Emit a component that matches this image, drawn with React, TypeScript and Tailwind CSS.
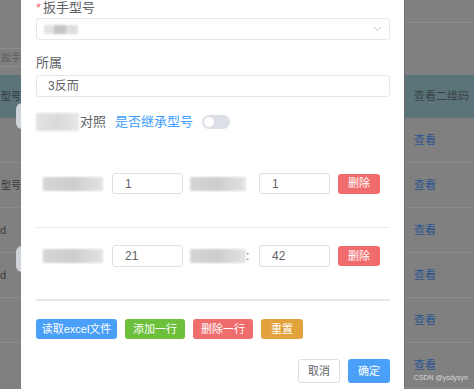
import React from 'react';

// Mosaic-blurred placeholder (the screenshot hides these labels)
const Smudge: React.FC<{ className?: string }> = ({ className = '' }) => (
  <div className={`rounded-[1px] bg-gradient-to-r from-[#d6d6d6] via-[#cdcdcd] to-[#e4e4e4] blur-[1px] ${className}`} />
);

const Field: React.FC<{ value: string }> = ({ value }) => (
  <div className="flex h-full w-[71px] items-center rounded-[3px] border border-[#dcdfe6] pl-[12px] text-[12px] text-[#606266]">
    {value}
  </div>
);

const Btn: React.FC<{ label: string; className: string }> = ({ label, className }) => (
  <div className={`flex h-full items-center justify-center rounded-[3px] text-[11px] text-white ${className}`}>{label}</div>
);

const LeftColumn = () => (
  <div className="flex w-[21px] shrink-0 flex-col overflow-hidden whitespace-nowrap text-[10px]">
    <div className="h-[75px]">
      <div className="mt-[48px] flex h-[19px] items-center justify-end border-y border-[#8e8e8e] text-[#5e5e5e]">
        扳手
      </div>
    </div>
    <div className="flex h-[43px] items-center justify-end bg-[#5b7479] text-[#2f3a3c]">型号</div>
    <div className="h-[45px] border-b border-[#8a8a8a]" />
    <div className="flex h-[45px] items-center justify-end border-b border-[#8a8a8a] text-[#3a3a3a]">型号</div>
    <div className="flex h-[45px] items-center border-b border-[#8a8a8a] text-[11px] text-[#3a3a3a]">d</div>
    <div className="flex h-[45px] items-center border-b border-[#8a8a8a] text-[11px] text-[#3a3a3a]">d</div>
    <div className="h-[45px] border-b border-[#8a8a8a]" />
  </div>
);

const RightColumn = () => (
  <div className="flex flex-1 flex-col border-l border-[#6e6e6e] text-[11px]">
    <div className="h-[75px]">
      <div className="mt-[22px] h-px bg-[#8a8a8a]" />
    </div>
    <div className="flex h-[43px] items-center bg-[#5b7479] pl-[9px] text-[#3a4446]">查看二维码</div>
    {[0, 1, 2, 3, 4, 5].map((i) => (
      <div key={i} className="flex h-[45px] shrink-0 items-center border-b border-[#8a8a8a] pl-[9px] text-[#2a5590]">
        查看
      </div>
    ))}
  </div>
);

const PairRow: React.FC<{ a: string; b: string; colon?: boolean; h: string }> = ({ a, b, colon, h }) => (
  <div className={`flex items-center ${h}`}>
    <Smudge className="ml-[7px] h-[14px] w-[60px]" />
    <div className="ml-[9px] h-full">
      <Field value={a} />
    </div>
    <Smudge className="ml-[7px] h-[14px] w-[56px]" />
    <span className="w-[4px] text-[12px] text-[#606266]">{colon ? ':' : ''}</span>
    <div className="ml-[9px] h-full">
      <Field value={b} />
    </div>
    <div className="ml-[8px] h-[20px] w-[42px]">
      <Btn label="删除" className="bg-[#f06c6c]" />
    </div>
  </div>
);

export default function App() {
  return (
    <div className="relative flex h-[389px] w-[474px] overflow-hidden bg-[#808080] font-['Liberation_Sans','Noto_Sans_CJK_SC',sans-serif]">
      <LeftColumn />

      {/* edge bits peeking out from under the dialog */}
      <div className="absolute left-[16px] top-[103px] h-[26px] w-[12px] rounded-full bg-[#cfd3d7]" />
      <div className="absolute left-[16px] top-[246px] h-[26px] w-[12px] rounded-full bg-[#cfd3d7]" />

      <div className="relative z-10 flex w-[383px] shrink-0 flex-col bg-white pl-[15px] pr-[14px] text-[13px] text-[#606266]">
        <div className="flex h-[16px] items-center">
          <span className="mr-[2px] text-[#f56c6c]">*</span>
          <span>扳手型号</span>
        </div>
        <div className="mt-[2px] flex h-[22px] items-center justify-between rounded-[3px] border border-[#e4e7ed] pl-[7px] pr-[7px]">
          <div className="flex h-[9px] w-[34px] blur-[1px]">
            <div className="w-[10px] bg-[#e2e2e2]" />
            <div className="w-[12px] bg-[#c4c4c4]" />
            <div className="w-[12px] bg-[#dedede]" />
          </div>
          <svg width="9" height="6" viewBox="0 0 9 6" fill="none">
            <path d="M1 1l3.5 3.5L8 1" stroke="#c0c4cc" strokeWidth="1" />
          </svg>
        </div>

        <div className="mt-[15px] flex h-[16px] items-center">所属</div>
        <div className="mt-[4px] flex h-[22px] items-center rounded-[3px] border border-[#e4e7ed] pl-[11px] text-[12px]">
          3反而
        </div>

        <div className="mt-[16px] flex h-[18px] items-center">
          <Smudge className="h-[18px] w-[43px] from-[#e2e2e2] via-[#dadada] to-[#e8e8e8]" />
          <span className="ml-[1px]">对照</span>
          <span className="ml-[9px] text-[#409eff]">是否继承型号</span>
          <div className="ml-[9px] flex h-[14px] w-[28px] items-center rounded-full bg-[#dcdfe6] px-[2px]">
            <div className="h-[10px] w-[10px] rounded-full bg-white" />
          </div>
        </div>

        <div className="mt-[42px]">
          <PairRow a="1" b="1" h="h-[21px]" />
        </div>

        <div className="mt-[33px] h-px bg-[#ebebeb]" />

        <div className="mt-[17px]">
          <PairRow a="21" b="42" colon h="h-[22px]" />
        </div>

        <div className="mt-[32px] h-[2px] bg-[#e6e6e6]" />

        <div className="mt-[18px] flex h-[20px] gap-[8px]">
          <div className="w-[81px]">
            <Btn label="读取excel文件" className="bg-[#4a9ff9]" />
          </div>
          <div className="w-[60px]">
            <Btn label="添加一行" className="bg-[#6cc03b]" />
          </div>
          <div className="w-[60px]">
            <Btn label="删除一行" className="bg-[#ef6d6d]" />
          </div>
          <div className="w-[42px]">
            <Btn label="重置" className="bg-[#e2a23b]" />
          </div>
        </div>

        <div className="mt-[20px] flex h-[24px] justify-end gap-[8px]">
          <div className="flex w-[42px] items-center justify-center rounded-[3px] border border-[#dcdfe6] text-[11px] text-[#606266]">
            取消
          </div>
          <div className="w-[42px]">
            <Btn label="确定" className="bg-[#4a9ff9]" />
          </div>
        </div>
      </div>

      <RightColumn />

      <div className="absolute bottom-[6px] right-[6px] text-[7px] text-[#d8d8d8]">CSDN @ysdysyn</div>
    </div>
  );
}
